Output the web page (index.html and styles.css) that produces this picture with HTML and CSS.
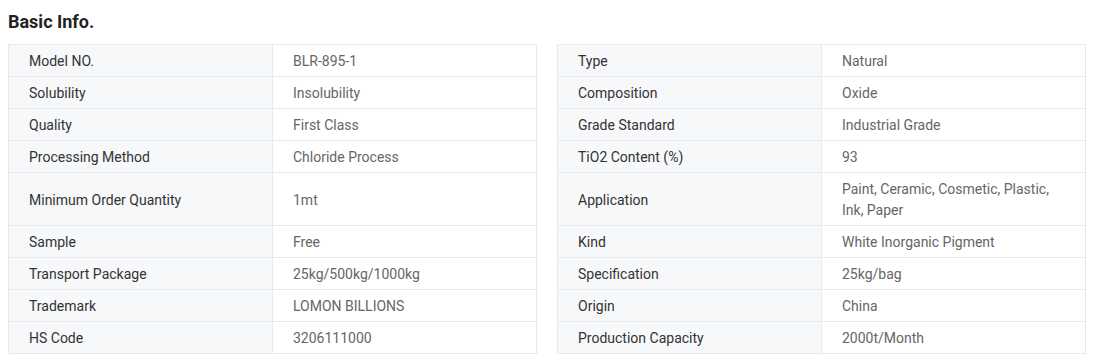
FILE: index.html
```html
<!DOCTYPE html>
<html>
<head>
<meta charset="utf-8">
<link rel="stylesheet" href="styles.css">
</head>
<body>
<div class="page">
  <h2 class="title">Basic Info.</h2>
  <table class="info">
    <colgroup>
      <col class="c-label"><col class="c-value"><col class="c-gap"><col class="c-label"><col class="c-value">
    </colgroup>
    <tr><th>Model NO.</th><td>BLR-895-1</td><td class="gap"></td><th>Type</th><td>Natural</td></tr>
    <tr><th>Solubility</th><td>Insolubility</td><td class="gap"></td><th>Composition</th><td>Oxide</td></tr>
    <tr><th>Quality</th><td>First Class</td><td class="gap"></td><th>Grade Standard</th><td>Industrial Grade</td></tr>
    <tr><th>Processing Method</th><td>Chloride Process</td><td class="gap"></td><th>TiO2 Content (%)</th><td>93</td></tr>
    <tr><th>Minimum Order Quantity</th><td>1mt</td><td class="gap"></td><th>Application</th><td>Paint, Ceramic, Cosmetic, Plastic, Ink, Paper</td></tr>
    <tr><th>Sample</th><td>Free</td><td class="gap"></td><th>Kind</th><td>White Inorganic Pigment</td></tr>
    <tr><th>Transport Package</th><td>25kg/500kg/1000kg</td><td class="gap"></td><th>Specification</th><td>25kg/bag</td></tr>
    <tr><th>Trademark</th><td>LOMON BILLIONS</td><td class="gap"></td><th>Origin</th><td>China</td></tr>
    <tr><th>HS Code</th><td>3206111000</td><td class="gap"></td><th>Production Capacity</th><td>2000t/Month</td></tr>
  </table>
</div>
</body>
</html>
```
FILE: styles.css
```css
html, body {
  margin: 0;
  padding: 0;
  background: #fff;
}
body {
  font-family: Roboto, "Liberation Sans", Arial, sans-serif;
}
.page {
  padding: 8px 8px 0 8px;
}
.title {
  margin: 0 0 8px 0;
  height: 28px;
  line-height: 28px;
  font-size: 18px;
  font-weight: 700;
  color: #222;
}
.info {
  width: 1077px;
  border-collapse: collapse;
  table-layout: fixed;
  font-size: 14px;
  line-height: 21px;
}
.c-label, .c-value {
  width: 264px;
}
.c-gap {
  width: 21px;
}
.info th, .info td {
  border: 1px solid #e6e9ef;
  padding: 6px 20px 4px 20px;
  text-align: left;
  vertical-align: middle;
  font-weight: 400;
}
.info th {
  background: #f7f8fa;
  color: #333;
}
.info td {
  color: #666;
}
.info td.gap {
  border-top: none;
  border-bottom: none;
  padding: 0;
  background: #fff;
}
```
